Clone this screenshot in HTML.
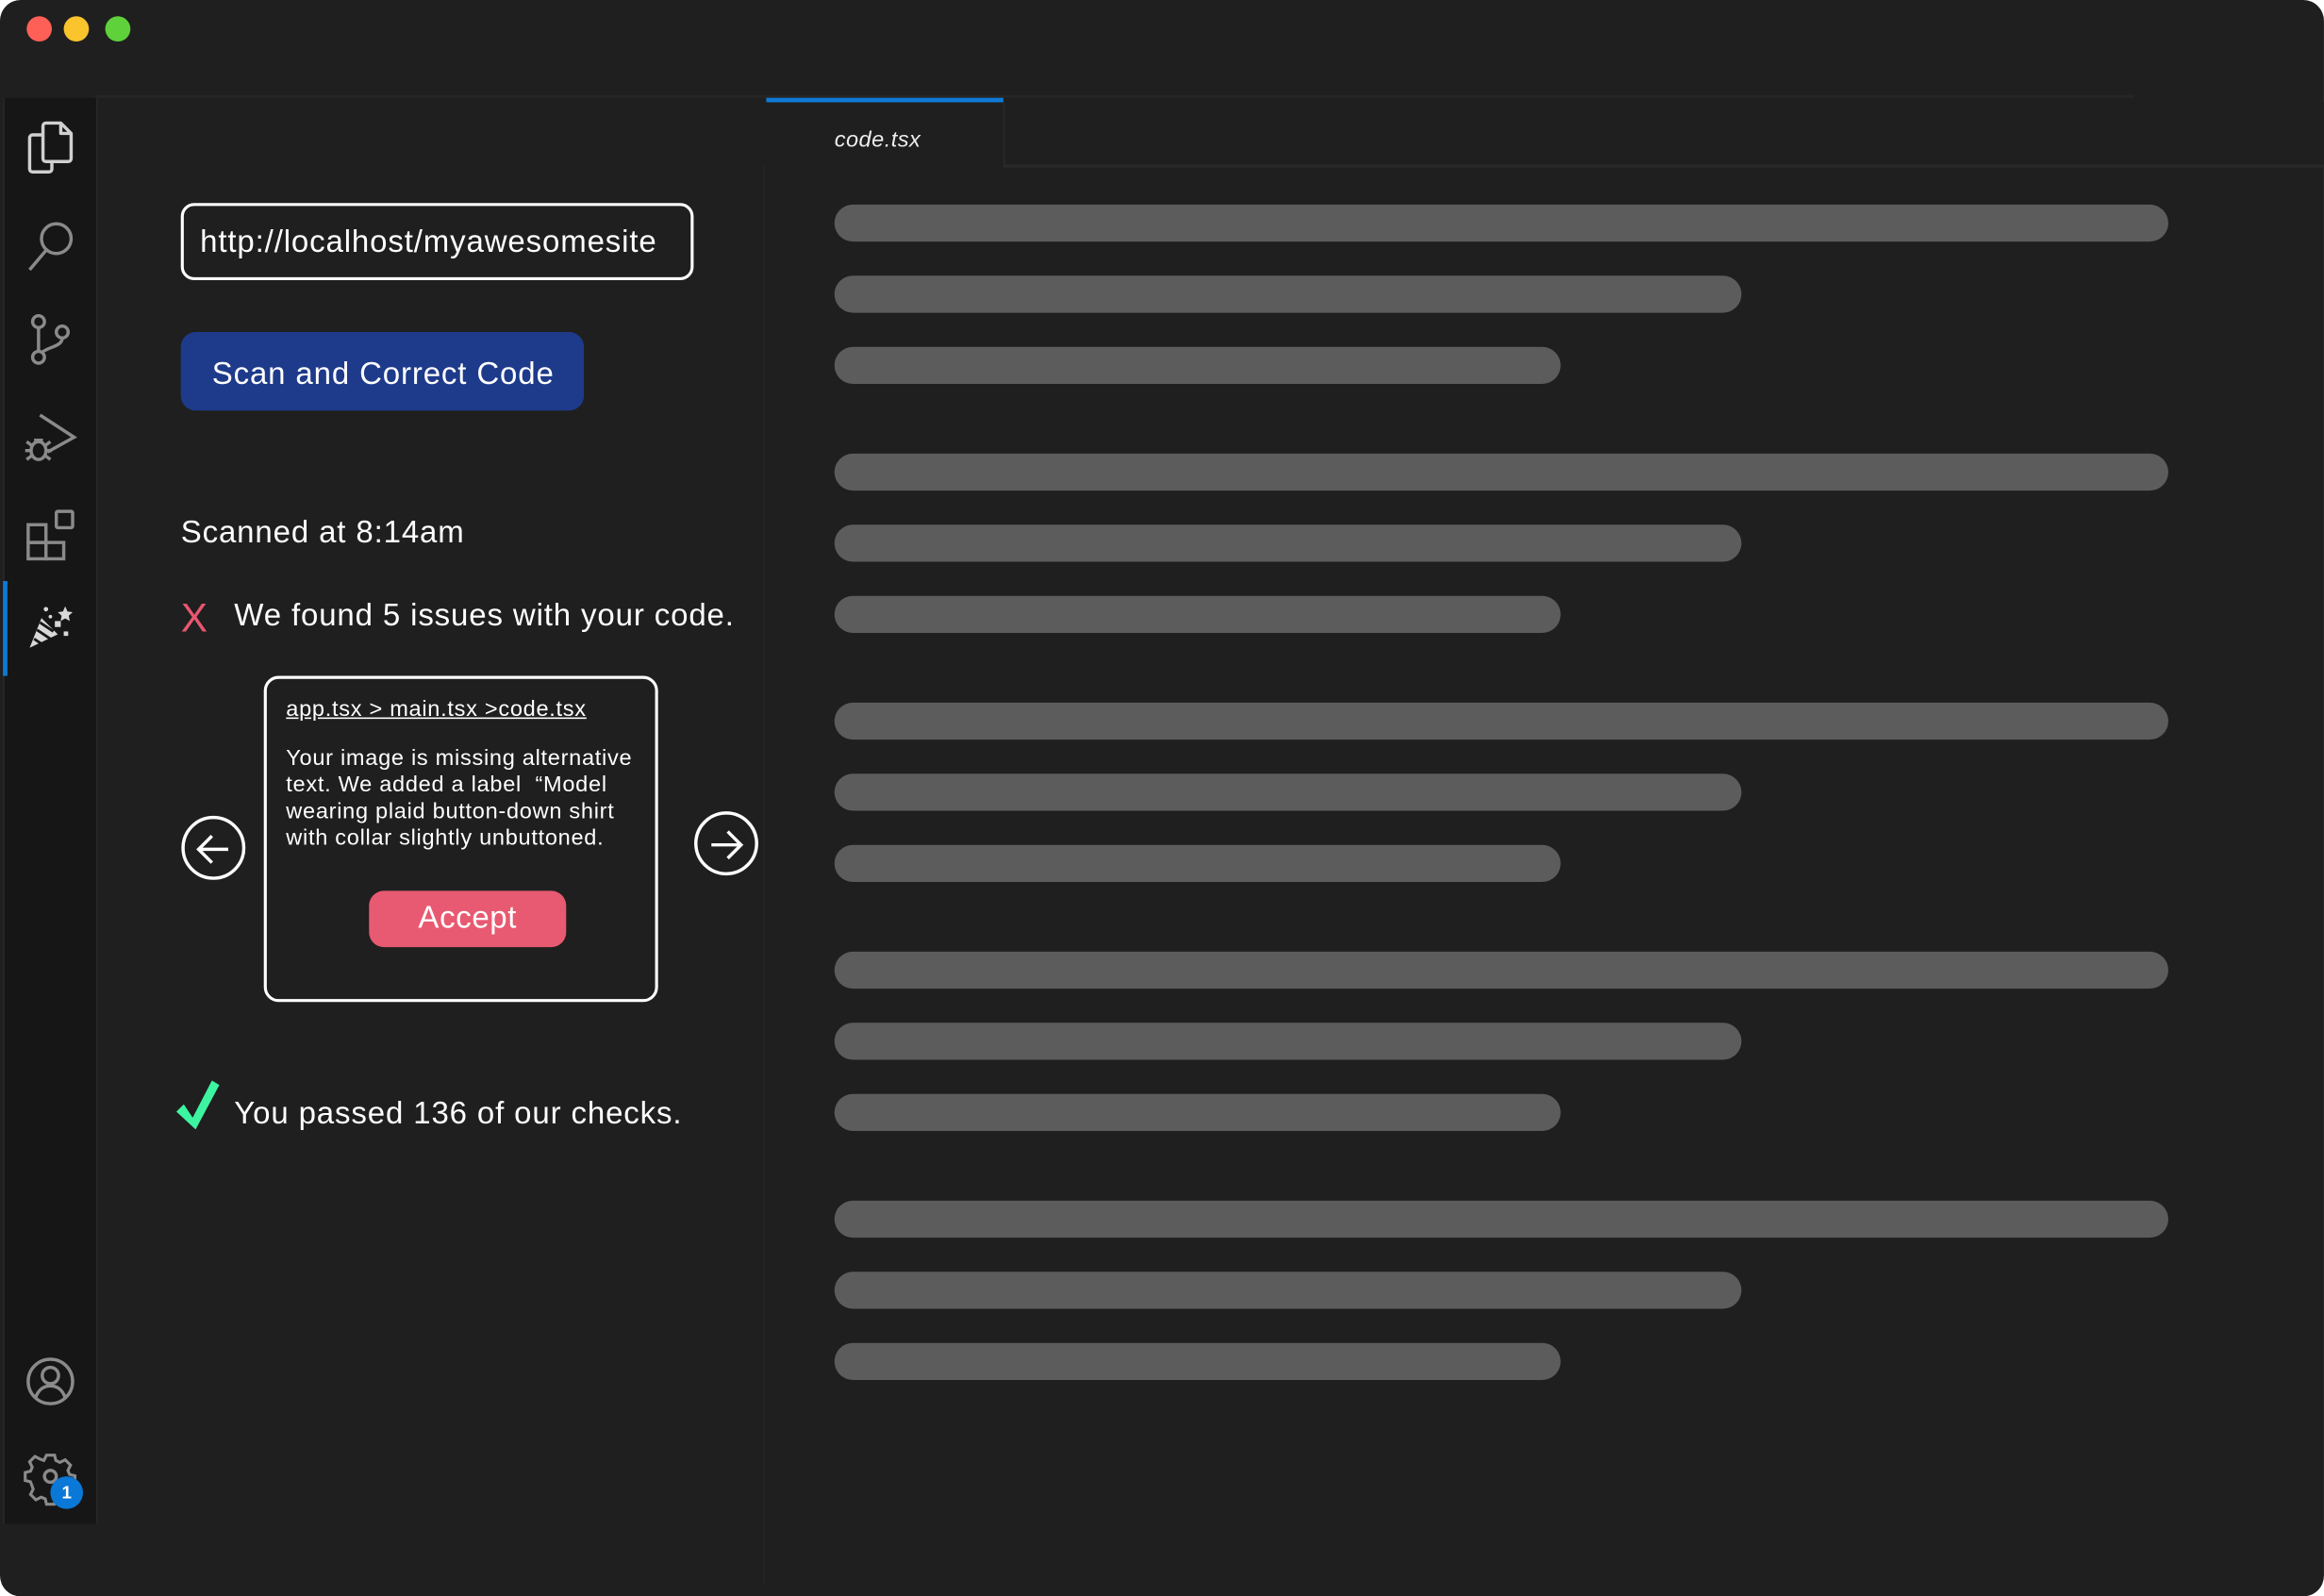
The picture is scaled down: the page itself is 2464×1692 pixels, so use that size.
<!DOCTYPE html>
<html><head><meta charset="utf-8">
<style>
html,body{margin:0;padding:0;background:#fff;width:2464px;height:1692px;overflow:hidden}
#s{position:absolute;left:0;top:0;width:1568px;height:1077px;transform:scale(1.5714);transform-origin:0 0;font-family:"Liberation Sans",sans-serif;color:#fff}
.win{position:absolute;left:0;top:0;width:1568px;height:1077px;background:#1f1f1f;border-radius:14px;overflow:hidden}
.dot{position:absolute;top:11px;width:17px;height:17px;border-radius:50%}
.act{position:absolute;left:2px;top:66px;width:62px;height:962px;background:#161616;border-right:1px solid #2a2a2a;border-left:1px solid #2a2a2a}
.ic{position:absolute;left:14px}
.bar{position:absolute;left:563px;height:25px;border-radius:12.5px;background:#5c5c5c}
.t{position:absolute;white-space:nowrap}
.m{font-size:21px;letter-spacing:.55px}
.c{font-size:15px;letter-spacing:.45px}
</style></head><body>
<div id="s">
<div class="win">
 <div class="dot" style="left:18px;background:#fe5f57"></div>
 <div class="dot" style="left:43px;background:#f9c42c"></div>
 <div class="dot" style="left:71px;background:#5fd13b"></div>
 <div style="position:absolute;left:64px;top:64px;width:1376px;height:2px;background:#262626"></div>
 <div class="act">
  <svg class="ic" style="top:14px" width="34" height="38" viewBox="0 0 34 38" fill="none" stroke="#d0d0d0" stroke-width="2.2" stroke-linejoin="round">
   <path d="M14 3h10l7 7v17a2 2 0 0 1-2 2H14a2 2 0 0 1-2-2V5a2 2 0 0 1 2-2z"/><path d="M24 3v7h7"/>
   <path d="M12 11H5a2 2 0 0 0-2 2v21a2 2 0 0 0 2 2h11a2 2 0 0 0 2-2v-5"/></svg>
  <svg class="ic" style="top:80px" width="36" height="38" viewBox="0 0 36 38" fill="none" stroke="#8a8a8a" stroke-width="2.2"><circle cx="21" cy="15" r="10"/><path d="M14 23L3 36"/></svg>
  <svg class="ic" style="top:144px" width="34" height="40" viewBox="0 0 34 40" fill="none" stroke="#8a8a8a" stroke-width="2.2"><circle cx="9" cy="7" r="4"/><circle cx="9" cy="31" r="4"/><circle cx="25" cy="14" r="4"/><path d="M9 11v16M25 18c0 6-10 6-14 10"/></svg>
  <svg class="ic" style="top:210px;left:12px" width="40" height="40" viewBox="0 0 40 40" fill="none" stroke="#8a8a8a" stroke-width="2.2"><path d="M12 4l23 15-18 10"/><ellipse cx="11" cy="28" rx="5" ry="6"/><path d="M3 22l4 3M3 34l4-3M19 22l-4 3M19 34l-4-3M2 28h4M16 28h4M8 21h6"/></svg>
  <svg class="ic" style="top:276px;left:13px" width="38" height="38" viewBox="0 0 38 38" fill="none" stroke="#8a8a8a" stroke-width="2.2"><rect x="3" y="12" width="12" height="12"/><rect x="3" y="24" width="12" height="11"/><rect x="15" y="24" width="12" height="11"/><rect x="22" y="3" width="11" height="11" rx="1"/></svg>
  <div style="position:absolute;left:-1px;top:326px;width:3px;height:64px;background:#0e7ad6"></div>
  <svg class="ic" style="top:340px;left:14px" width="34" height="34" viewBox="0 0 34 34"><path d="M3 31l8-20 11 11z" fill="#d8d8d8"/><path d="M6 25l6 4M8 19l9 6M10 14l9 6" stroke="#161616" stroke-width="1.8"/><path d="M27 3l1.5 3.5 3.5.5-2.6 2.4.7 3.6-3.1-1.8-3.1 1.8.7-3.6L22 7l3.5-.5z" fill="#d8d8d8"/><circle cx="14" cy="5" r="1.5" fill="#d8d8d8"/><rect x="20" y="13" width="4" height="4" fill="#d8d8d8"/><rect x="26" y="20" width="3" height="3" fill="#d8d8d8"/><circle cx="17" cy="10" r="1.2" fill="#d8d8d8"/></svg>
  <svg class="ic" style="top:848px;left:13px" width="36" height="36" viewBox="0 0 36 36" fill="none" stroke="#8a8a8a" stroke-width="2.2"><circle cx="18" cy="18" r="15"/><circle cx="18" cy="14" r="5.5"/><path d="M8 29c2-6 6-8 10-8s8 2 10 8"/></svg>
  <svg class="ic" style="top:912px;left:12px" width="40" height="40" viewBox="0 0 40 40" fill="none" stroke="#8a8a8a" stroke-width="2.2"><path d="M16 3h6l1 4 3 1.5 4-2 4 4-2 4 1.3 3 4 1v6l-4 1-1.3 3 2 4-4 4-4-2-3 1.3-1 4h-6l-1-4-3-1.3-4 2-4-4 2-4L4 23l-4-1v-6l4-1 1.3-3-2-4 4-4 4 2L14 7z" transform="translate(2 1) scale(.9)"/><circle cx="19" cy="18" r="4"/></svg>
  <div style="position:absolute;left:31px;top:930px;width:22px;height:22px;border-radius:50%;background:#0a78d6;font-size:12px;font-weight:bold;text-align:center;line-height:22px">1</div>
 </div>
 <div style="position:absolute;left:515px;top:112px;width:1px;height:956px;background:#252525"></div>
 <div style="position:absolute;left:517px;top:66px;width:160px;height:3px;background:#0e7ad6"></div>
 <div style="position:absolute;left:677px;top:69px;width:891px;height:42px;border-left:1px solid #2a2a2a;border-bottom:2px solid #292929;background:#1f1f1f"></div>
 <div class="t" style="left:563px;top:86px;font-size:15px;font-style:italic;color:#eee;letter-spacing:.3px">code.tsx</div>

 <div style="position:absolute;left:122px;top:137px;width:342px;height:48px;border:2.5px solid #fff;border-radius:9px"></div>
 <div class="t m" style="left:135px;top:152px">http://localhost/myawesomesite</div>
 <div style="position:absolute;left:122px;top:224px;width:272px;height:53px;background:#1e3a8a;border-radius:10px"></div>
 <div class="t m" style="left:143px;top:241px">Scan and Correct Code</div>
 <div class="t m" style="left:122px;top:348px">Scanned at 8:14am</div>
 <div class="t" style="left:122px;top:402px;font-size:27px;color:#e8566f">X</div>
 <div class="t m" style="left:158px;top:404px">We found 5 issues with your code.</div>

 <div style="position:absolute;left:178px;top:456px;width:262px;height:216px;border:2.5px solid #fff;border-radius:10px"></div>
 <div class="t c" style="left:193px;top:470px;text-decoration:underline">app.tsx &gt; main.tsx &gt;code.tsx</div>
 <div class="t c" style="left:193px;top:503px;line-height:18px">Your image is missing alternative<br>text. We added a label &nbsp;“Model<br>wearing plaid button-down shirt<br>with collar slightly unbuttoned.</div>
 <div style="position:absolute;left:249px;top:601px;width:133px;height:38px;background:#e85a71;border-radius:10px;font-size:21px;text-align:center;line-height:38px;letter-spacing:.4px">Accept</div>
 <svg style="position:absolute;left:121px;top:549px" width="46" height="46" viewBox="0 0 46 46" fill="none" stroke="#fff" stroke-width="2.2"><circle cx="23" cy="23" r="20.5"/><path d="M33 24H13M22 15l-9 9 9 9"/></svg>
 <svg style="position:absolute;left:467px;top:546px" width="46" height="46" viewBox="0 0 46 46" fill="none" stroke="#fff" stroke-width="2.2"><circle cx="23" cy="23" r="20.5"/><path d="M13 24h20M24 15l9 9-9 9"/></svg>

 <svg style="position:absolute;left:118px;top:728px" width="32" height="36" viewBox="0 0 32 36"><path d="M1 22l5-5 6 9L25 1l5 3-16 30z" fill="#3df5a0"/></svg>
 <div class="t m" style="left:158px;top:740px">You passed 136 of our checks.</div>

 <div class="bar" style="top:138px;width:900px"></div>
 <div class="bar" style="top:186px;width:612px"></div>
 <div class="bar" style="top:234px;width:490px"></div>
 <div class="bar" style="top:306px;width:900px"></div>
 <div class="bar" style="top:354px;width:612px"></div>
 <div class="bar" style="top:402px;width:490px"></div>
 <div class="bar" style="top:474px;width:900px"></div>
 <div class="bar" style="top:522px;width:612px"></div>
 <div class="bar" style="top:570px;width:490px"></div>
 <div class="bar" style="top:642px;width:900px"></div>
 <div class="bar" style="top:690px;width:612px"></div>
 <div class="bar" style="top:738px;width:490px"></div>
 <div class="bar" style="top:810px;width:900px"></div>
 <div class="bar" style="top:858px;width:612px"></div>
 <div class="bar" style="top:906px;width:490px"></div>
</div>
</div>
</body></html>
